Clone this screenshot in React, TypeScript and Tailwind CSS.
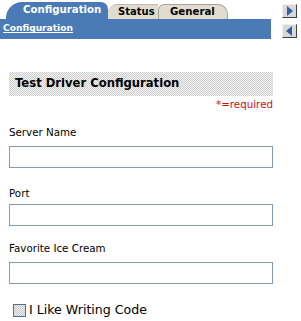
import React from "react";

function ArrowBox({ dir }: { dir: "left" | "right" }) {
  return (
    <div className="w-[15px] h-[14px] border border-t-[#f0f0f0] border-l-[#f0f0f0] border-r-[#404040] border-b-[#404040] bg-[#d8d8d8] flex items-center justify-center">
      <svg width="9" height="10" viewBox="0 0 9 10">
        {dir === "right" ? (
          <polygon points="2,0 8,5 2,10" fill="#2e62a8" />
        ) : (
          <polygon points="7,0 1,5 7,10" fill="#2e62a8" />
        )}
      </svg>
    </div>
  );
}

export default function App() {
  const font = { fontFamily: '"DejaVu Sans", Verdana, sans-serif' };
  return (
    <div className="w-[301px] h-[321px] bg-white overflow-hidden" style={font}>
      <div className="flex">
        <div className="w-[271px]">
          <div className="h-[19px] flex items-end pl-[6px]">
            <div className="w-[102px] h-[17px] bg-[#4a7bb7] rounded-tl-[16px] rounded-tr-[7px] flex items-center pl-[17px] text-white font-bold text-[10.2px] leading-none">
              Configuration
            </div>
            <div className="w-[50px] h-[15px] bg-[#e0ddd0] rounded-tl-[9px] border-t border-[#c0bdb0] flex items-center pl-[10px] text-black font-bold text-[10px] leading-none">
              Status
            </div>
            <div className="w-[70px] h-[15px] bg-[#e0ddd0] rounded-tl-[6px] rounded-tr-[10px] border-t border-l border-r border-[#a8a598] flex items-center pl-[11px] text-black font-bold text-[10.2px] leading-none">
              General
            </div>
          </div>
          <div className="h-[20px] bg-[#4a7bb7] flex items-center pl-[3px]">
            <span className="text-white font-bold text-[9.1px] underline leading-none">Configuration</span>
          </div>
        </div>
        <div className="ml-[11px] pt-[4px] flex flex-col gap-[6px]">
          <ArrowBox dir="right" />
          <ArrowBox dir="left" />
        </div>
      </div>

      <div className="px-[9px] w-[282px]">
        <div className="mt-[33px] h-[24px] bg-[repeating-conic-gradient(#cfcfcf_0_25%,#f4f4f4_0_50%)] bg-[length:2px_2px] flex items-center pl-[6px] text-black font-bold text-[11.6px]">
          Test Driver Configuration
        </div>
        <div className="mt-[1px] h-[14px] flex items-center justify-end text-[#cc1111] text-[10.3px] leading-none">*=required</div>

        <div className="mt-[14px] h-[14px] flex items-center text-[10.3px] leading-none text-black">Server Name</div>
        <div className="mt-[7px] h-[22px] border border-[#7f9db9] bg-white" />

        <div className="mt-[18px] h-[14px] flex items-center text-[10.3px] leading-none text-black">Port</div>
        <div className="mt-[4px] h-[22px] border border-[#7f9db9] bg-white" />

        <div className="mt-[15px] h-[14px] flex items-center text-[10.3px] leading-none text-black">Favorite Ice Cream</div>
        <div className="mt-[7px] h-[22px] border border-[#7f9db9] bg-white" />

        <div className="mt-[20px] h-[13px] flex items-center pl-[4px]">
          <div className="w-[13px] h-[13px] border border-[#4d6e99] bg-[repeating-conic-gradient(#c8c8c8_0_25%,#f0f0f0_0_50%)] bg-[length:2px_2px]" />
          <span className="ml-[3px] text-[12.6px] leading-none text-black">I Like Writing Code</span>
        </div>
      </div>
    </div>
  );
}
